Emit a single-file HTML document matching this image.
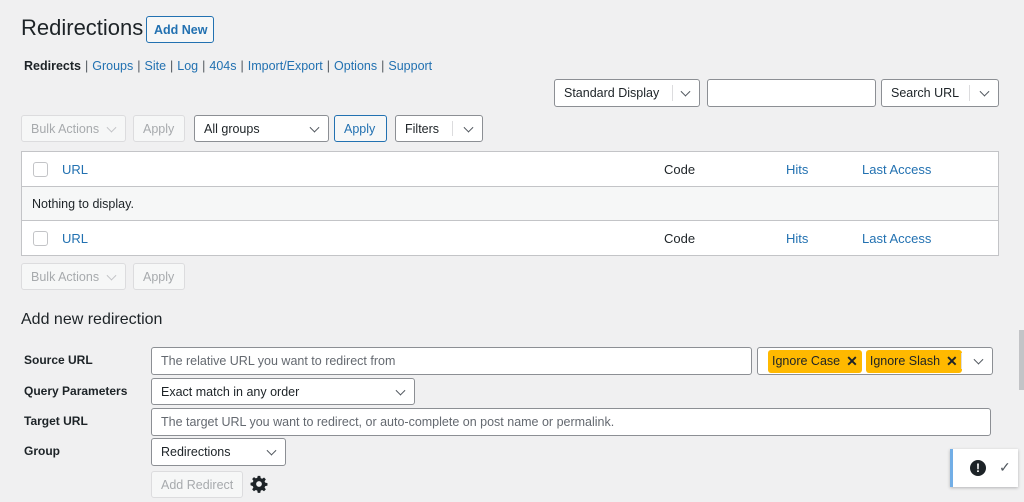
<!DOCTYPE html>
<html><head><style>
*{box-sizing:border-box;margin:0;padding:0}
body{width:1024px;height:502px;background:#f0f0f1;font-family:"Liberation Sans",sans-serif;font-size:13px;color:#1d2327;position:relative;overflow:hidden}
.a{position:absolute}
.box{position:absolute;border:1px solid #8c8f94;border-radius:3px;background:#fff;display:flex;align-items:center;padding-left:9px;font-size:12.5px}
.dis{border-color:#dcdcde;background:#f6f7f7;color:#a7aaad}
.chev{position:absolute;right:10px;top:50%;width:7px;height:7px;border-right:1.5px solid #50575e;border-bottom:1.5px solid #50575e;transform:translateY(-70%) rotate(45deg)}
.dis .chev{border-color:#c3c4c7}
.sep{position:absolute;top:5px;bottom:5px;width:1px;background:#dcdcde}
.link{color:#2271b1}
.lbl{position:absolute;left:24px;font-weight:bold;font-size:12px}
.ph{color:#646970}
.tag{background:#ffb900;border-radius:3px;padding:3px 4px;margin-right:4px;font-size:12.5px;display:inline-flex;align-items:center;gap:6px}
.tag b{font-size:14px}
.nav span.p{margin:0 4px;color:#50575e}
</style></head><body>
<div class="a" style="left:21px;top:15px;font-size:22px;">Redirections</div>
<div class="box" style="left:146px;top:16px;width:68px;height:27px;border-color:#2271b1;color:#2271b1;font-weight:bold;font-size:12.5px;padding-left:7px;background:#f6f7f7">Add New</div>
<div class="a nav" style="left:24px;top:59px;font-size:12.5px;color:#50575e"><b style="color:#1d2327">Redirects</b><span class="p">|</span><span class="link">Groups</span><span class="p">|</span><span class="link">Site</span><span class="p">|</span><span class="link">Log</span><span class="p">|</span><span class="link">404s</span><span class="p">|</span><span class="link">Import/Export</span><span class="p">|</span><span class="link">Options</span><span class="p">|</span><span class="link">Support</span></div>

<div class="box" style="left:554px;top:79px;width:146px;height:28px;">Standard Display<div class="sep" style="left:117px"></div><div class="chev"></div></div>
<div class="box" style="left:707px;top:79px;width:169px;height:28px;"></div>
<div class="box" style="left:881px;top:79px;width:118px;height:28px;">Search URL<div class="sep" style="left:87px"></div><div class="chev"></div></div>

<div class="box dis" style="left:21px;top:115px;width:105px;height:27px;">Bulk Actions<div class="chev"></div></div>
<div class="box dis" style="left:133px;top:115px;width:52px;height:27px;">Apply</div>
<div class="box" style="left:194px;top:115px;width:135px;height:27px;">All groups<div class="chev"></div></div>
<div class="box" style="left:334px;top:115px;width:53px;height:27px;border-color:#2271b1;color:#2271b1;background:#f6f7f7">Apply</div>
<div class="box" style="left:395px;top:115px;width:88px;height:27px;">Filters<div class="sep" style="left:56px"></div><div class="chev"></div></div>

<div class="a" style="left:21px;top:151px;width:978px;height:105px;border:1px solid #c3c4c7;background:#fff">
 <div class="a" style="left:0;top:34px;width:976px;height:35px;background:#f6f7f7;border-top:1px solid #c3c4c7;border-bottom:1px solid #c3c4c7"></div>
 <div class="a" style="left:11px;top:10px;width:15px;height:15px;border:1px solid #c3c4c7;border-radius:3px"></div>
 <div class="a link" style="left:40px;top:10px">URL</div>
 <div class="a" style="left:642px;top:10px">Code</div>
 <div class="a link" style="left:764px;top:10px">Hits</div>
 <div class="a link" style="left:840px;top:10px">Last Access</div>
 <div class="a" style="left:10px;top:45px;font-size:12.5px">Nothing to display.</div>
 <div class="a" style="left:11px;top:79px;width:15px;height:15px;border:1px solid #c3c4c7;border-radius:3px"></div>
 <div class="a link" style="left:40px;top:79px">URL</div>
 <div class="a" style="left:642px;top:79px">Code</div>
 <div class="a link" style="left:764px;top:79px">Hits</div>
 <div class="a link" style="left:840px;top:79px">Last Access</div>
</div>

<div class="box dis" style="left:21px;top:263px;width:105px;height:27px;">Bulk Actions<div class="chev"></div></div>
<div class="box dis" style="left:133px;top:263px;width:52px;height:27px;">Apply</div>

<div class="a" style="left:21px;top:311px;font-size:16px;">Add new redirection</div>
<div class="lbl" style="top:353px">Source URL</div>
<div class="lbl" style="top:384px">Query Parameters</div>
<div class="lbl" style="top:414px">Target URL</div>
<div class="lbl" style="top:444px">Group</div>

<div class="box ph" style="left:151px;top:347px;width:601px;height:28px;">The relative URL you want to redirect from</div>
<div class="box" style="left:757px;top:347px;width:236px;height:28px;padding-left:10px">
 <span class="tag">Ignore Case <b>✕</b></span><span class="tag">Ignore Slash <b>✕</b></span>
 <div class="sep" style="left:203px"></div><div class="chev"></div></div>
<div class="box" style="left:151px;top:378px;width:264px;height:27px;">Exact match in any order<div class="chev"></div></div>
<div class="box ph" style="left:151px;top:408px;width:840px;height:28px;">The target URL you want to redirect, or auto-complete on post name or permalink.</div>
<div class="box" style="left:151px;top:438px;width:135px;height:28px;">Redirections<div class="chev"></div></div>
<div class="box dis" style="left:151px;top:471px;width:92px;height:27px;">Add Redirect</div>
<svg class="a" style="left:250px;top:475px" width="18" height="18" viewBox="0 0 20 20"><path fill="#1d2327" d="M8.6 1h2.8l.5 2.5 1.6.7 2.1-1.4 2 2-1.4 2.1.7 1.6 2.5.5v2.8l-2.5.5-.7 1.6 1.4 2.1-2 2-2.1-1.4-1.6.7-.5 2.5H8.6l-.5-2.5-1.6-.7-2.1 1.4-2-2 1.4-2.1-.7-1.6L.6 11.4V8.6l2.5-.5.7-1.6L2.4 4.4l2-2 2.1 1.4 1.6-.7zM10 6.8a3.2 3.2 0 100 6.4 3.2 3.2 0 000-6.4z"/></svg>

<div class="a" style="left:950px;top:449px;width:68px;height:38px;background:#fff;border-left:3px solid #72aee6;box-shadow:0 1px 3px rgba(0,0,0,.25)">
 <div class="a" style="left:17px;top:11px;width:16px;height:16px;border-radius:50%;background:#1d2327;color:#fff;font-weight:bold;font-size:12px;text-align:center;line-height:16px">!</div>
 <div class="a" style="left:46px;top:10px;font-size:14px;color:#50575e">✓</div>
</div>
<div class="a" style="left:1019px;top:330px;width:5px;height:60px;background:#c3c4c7"></div>
</body></html>
